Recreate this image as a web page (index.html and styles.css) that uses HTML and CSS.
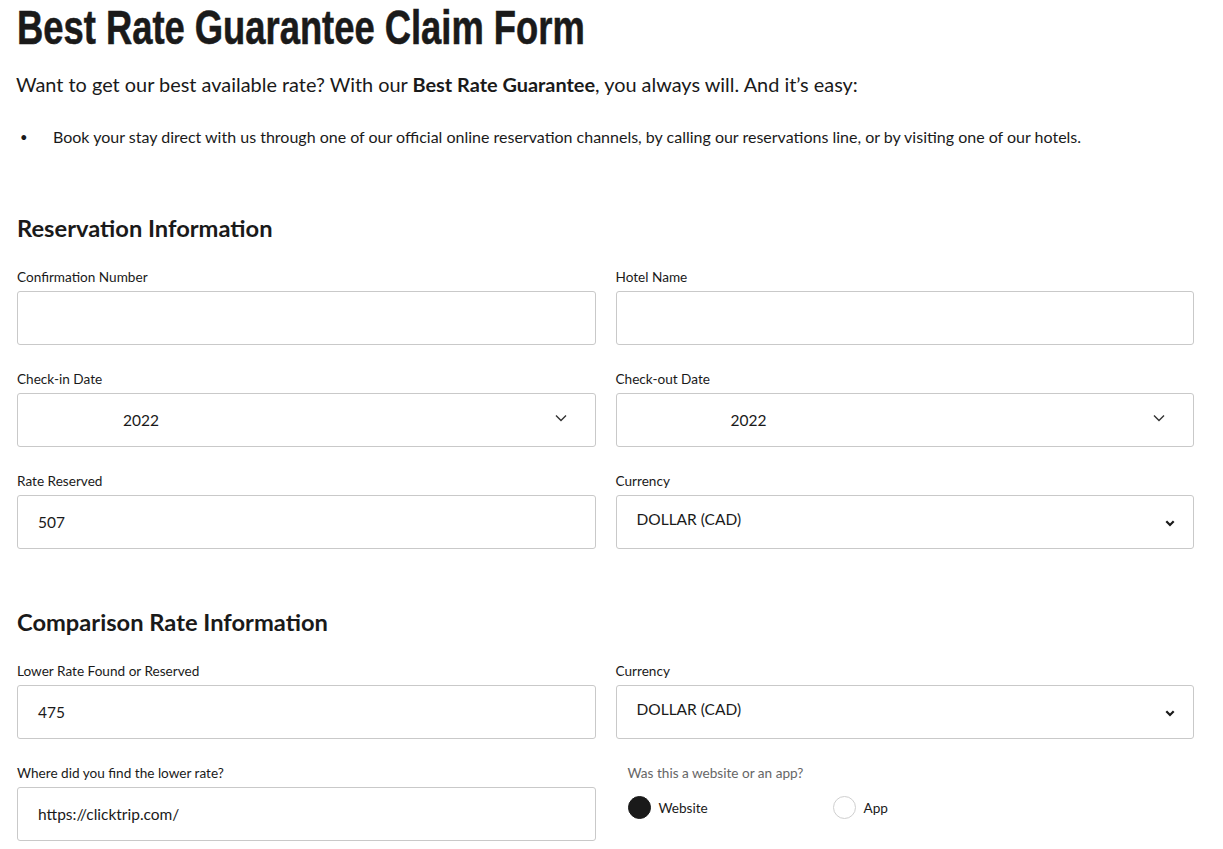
FILE: index.html
```html
<!DOCTYPE html>
<html lang="en">
<head>
<meta charset="utf-8">
<title>Best Rate Guarantee Claim Form</title>
<link rel="stylesheet" href="styles.css">
</head>
<body>
<main class="page">
  <h1 class="title"><span class="title-text">Best Rate Guarantee Claim Form</span></h1>
  <p class="intro">Want to get our best available rate? With our <strong>Best Rate Guarantee</strong>, you always will. And it’s easy:</p>
  <ul class="steps">
    <li>Book your stay direct with us through one of our official online reservation channels, by calling our reservations line, or by visiting one of our hotels.</li>
  </ul>

  <section class="section">
    <h2 class="section-title">Reservation Information</h2>
    <div class="grid">
      <div class="field">
        <label class="label">Confirmation Number</label>
        <div class="box"></div>
      </div>
      <div class="field">
        <label class="label">Hotel Name</label>
        <div class="box"></div>
      </div>
      <div class="field">
        <label class="label">Check-in Date</label>
        <div class="box date"><span class="value year">2022</span><svg class="chev-thin" viewBox="0 0 12 8" width="12" height="8"><path d="M1 1.5l5 5 5-5" fill="none" stroke="#333" stroke-width="1.4"/></svg></div>
      </div>
      <div class="field">
        <label class="label">Check-out Date</label>
        <div class="box date right"><span class="value year">2022</span><svg class="chev-thin" viewBox="0 0 12 8" width="12" height="8"><path d="M1 1.5l5 5 5-5" fill="none" stroke="#333" stroke-width="1.4"/></svg></div>
      </div>
      <div class="field">
        <label class="label">Rate Reserved</label>
        <div class="box"><span class="value">507</span></div>
      </div>
      <div class="field">
        <label class="label">Currency</label>
        <div class="box select"><span class="value up">DOLLAR (CAD)</span><svg class="chev-bold" viewBox="0 0 10 7" width="10" height="7"><path d="M1.3 1.3l3.7 3.7 3.7-3.7" fill="none" stroke="#1a1a1a" stroke-width="2.2"/></svg></div>
      </div>
    </div>
  </section>

  <section class="section second">
    <h2 class="section-title">Comparison Rate Information</h2>
    <div class="grid">
      <div class="field">
        <label class="label">Lower Rate Found or Reserved</label>
        <div class="box"><span class="value">475</span></div>
      </div>
      <div class="field">
        <label class="label">Currency</label>
        <div class="box select"><span class="value up">DOLLAR (CAD)</span><svg class="chev-bold" viewBox="0 0 10 7" width="10" height="7"><path d="M1.3 1.3l3.7 3.7 3.7-3.7" fill="none" stroke="#1a1a1a" stroke-width="2.2"/></svg></div>
      </div>
      <div class="field">
        <label class="label">Where did you find the lower rate?</label>
        <div class="box"><span class="value">https://clicktrip.com/</span></div>
      </div>
      <div class="field radios">
        <p class="question">Was this a website or an app?</p>
        <div class="options">
          <div class="option"><span class="dot checked"></span><span class="opt-label">Website</span></div>
          <div class="option"><span class="dot"></span><span class="opt-label">App</span></div>
        </div>
      </div>
    </div>
  </section>
</main>
</body>
</html>
```

FILE: styles.css
```css
* { box-sizing: border-box; }

html, body {
  margin: 0;
  padding: 0;
  background: #fff;
}

body {
  font-family: Lato, "Open Sans", "Liberation Sans", sans-serif;
  color: #1a1a1a;
}

.page {
  padding: 0 29px 0 17px;
}

.title {
  font-family: "Liberation Sans", Arial, sans-serif;
  font-weight: 700;
  font-size: 49px;
  line-height: 54px;
  margin: 0;
  color: #1a1a1a;
  white-space: nowrap;
  -webkit-text-stroke: 0.6px #1a1a1a;
}

.title-text {
  display: inline-block;
  transform: scaleX(0.742);
  transform-origin: left center;
}

.intro {
  font-size: 19.9px;
  line-height: 24px;
  margin: 18px 0 0 -1px;
}

.intro strong { font-weight: 700; }

.steps {
  margin: 31px 0 0 0;
  padding: 0;
  list-style: none;
  font-size: 16px;
  line-height: 20px;
}

.steps li { display: flex; }
.steps li::before {
  content: "•";
  flex: 0 0 33px;
  padding-left: 3px;
  font-size: 13px;
}

.section { margin-top: 67px; }
.section.second { margin-top: 59px; }

.section-title {
  font-size: 23.7px;
  line-height: 28px;
  font-weight: 700;
  margin: 0 0 27px 0;
}

.grid {
  display: grid;
  grid-template-columns: 1fr 1fr;
  column-gap: 20px;
  row-gap: 26px;
}

.field { display: flex; flex-direction: column; }

.label {
  font-size: 13.6px;
  line-height: 16px;
  margin-bottom: 6px;
  color: #1a1a1a;
}

.box {
  height: 54px;
  border: 1px solid #c9c9c9;
  border-radius: 3px;
  display: flex;
  align-items: center;
  padding: 0 20px;
}

.value {
  font-size: 15.5px;
  color: #1a1a1a;
}

.box.date { justify-content: space-between; padding-right: 28px; }
.box.date .year { margin-left: 85px; }
.box.date.right .year { margin-left: 94px; }
.chev-thin { margin-top: -4px; }

.box.select { justify-content: space-between; padding-right: 18px; }
.box.select .up { margin-top: -6px; }
.chev-bold { margin-top: 2px; }

.radios { padding-left: 12px; }

.question {
  margin: 0 0 15px 0;
  font-size: 13.6px;
  line-height: 16px;
  color: #666;
}

.options { display: flex; }

.option {
  display: flex;
  align-items: center;
  width: 205px;
}

.dot {
  width: 23px;
  height: 23px;
  border-radius: 50%;
  border: 1px solid #cfcfcf;
  margin-right: 8px;
  background: #fff;
}

.dot.checked {
  background: #1a1a1a;
  border-color: #1a1a1a;
}

.opt-label { font-size: 13.6px; }
```
